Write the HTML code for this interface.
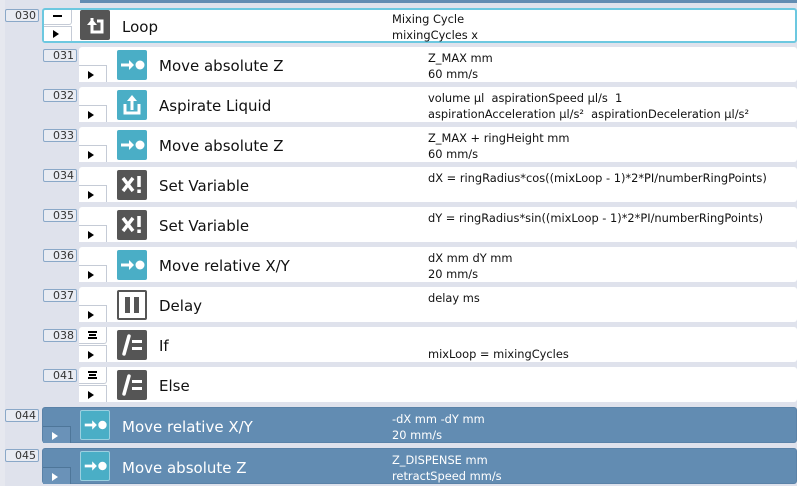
<!DOCTYPE html>
<html><head><meta charset="utf-8"><style>
*{margin:0;padding:0;box-sizing:border-box}
body{width:797px;height:486px;overflow:hidden;background:#dfe2ec;font-family:"DejaVu Sans","Liberation Sans",sans-serif;position:relative}
.a{position:absolute}
.tag{position:absolute;height:13px;width:34px;border:1px solid #8aa8c8;border-radius:2px;background:#e8ebf2;font-size:11px;line-height:11px;text-align:right;padding-right:2px;color:#333}
.row{position:absolute;left:79px;width:718px;height:35px;background:#fff;border-radius:3px}
.ctl{position:absolute;left:0;top:18px;width:28px;height:17px;border:1px solid #c5cbd6;border-left:none;border-bottom:none;background:#fff}
.ctl i{position:absolute;left:9px;top:5px;width:0;height:0;border-left:6px solid #000;border-top:4px solid transparent;border-bottom:4px solid transparent}
.ic{position:absolute;left:38px;top:3px;width:30px;height:30px;border-radius:2px}
.t{position:absolute;left:80px;top:10px;font-size:15px;color:#111}
.p{position:absolute;left:349px;top:3px;font-size:11.4px;line-height:16px;color:#111;white-space:nowrap}
.blue{position:absolute;left:42px;width:755px;height:36px;background:#628cb2;border-radius:3px;border:1px solid #5a82a8}
.blue .t{left:79px;color:#fff}
.blue .p{left:349px;color:#fff}
.blue .ic{left:37px;top:2px;border:1px solid #9cd0e0}
.blue .ctl{background:#6a92b8;border-color:#4e7699}
.blue .ctl i{border-left-color:#fff}
</style></head><body>
<div class="a" style="left:80px;top:0;width:717px;height:3px;background:#628cb2"></div>
<div class="a" style="left:0;top:0;width:5px;height:486px;background:#e6e8ef"></div>

<div class="tag" style="left:5px;top:9px">030</div>
<div class="a" style="left:42px;top:8px;width:755px;height:35px;background:#fff;border:2px solid #6cc8e0;border-radius:3px">
 <div class="a" style="left:0;top:0;width:28px;height:15px;border:1px solid #c5cbd6;border-left:none;border-top:none;border-radius:0 0 3px 0"><div class="a" style="left:9px;top:5px;width:9px;height:2px;background:#000"></div></div>
 <div class="ctl" style="top:16px;height:15px"><i style="top:3px"></i></div>
 <svg class="ic" style="left:36px;top:0;background:#555" viewBox="0 0 30 30"><path d="M12 8 L12 22 L22 22 L22 11 L17 11" fill="none" stroke="#fff" stroke-width="3"/><path d="M6 13 L11 7 L16 13 Z" fill="#fff" transform="translate(1,2)"/></svg>
 <div class="t" style="left:78px;top:8px">Loop</div>
 <div class="p" style="left:348px;top:1px">Mixing Cycle<br>mixingCycles x</div>
</div>

<div class="tag" style="left:43px;top:49px">031</div>
<div class="row" style="top:47px"><div class="ctl"><i></i></div>
<svg class="ic" style="background:#4aaec6" viewBox="0 0 30 30"><path d="M4 15 H14" stroke="#fff" stroke-width="3"/><path d="M12 10 L17 15 L12 20 Z" fill="#fff"/><circle cx="23" cy="15" r="4.5" fill="#fff"/></svg>
<div class="t">Move absolute Z</div><div class="p">Z_MAX mm<br>60 mm/s</div></div>

<div class="tag" style="left:43px;top:89px">032</div>
<div class="row" style="top:87px"><div class="ctl"><i></i></div>
<svg class="ic" style="background:#4aaec6" viewBox="0 0 30 30"><path d="M8 14 V23 H22 V14" fill="none" stroke="#fff" stroke-width="3"/><path d="M15 20 V9" stroke="#fff" stroke-width="3"/><path d="M10 11 L15 5 L20 11 Z" fill="#fff"/></svg>
<div class="t">Aspirate Liquid</div><div class="p">volume µl&nbsp; aspirationSpeed µl/s&nbsp; 1<br>aspirationAcceleration µl/s²&nbsp; aspirationDeceleration µl/s²</div></div>

<div class="tag" style="left:43px;top:129px">033</div>
<div class="row" style="top:127px"><div class="ctl"><i></i></div>
<svg class="ic" style="background:#4aaec6" viewBox="0 0 30 30"><path d="M4 15 H14" stroke="#fff" stroke-width="3"/><path d="M12 10 L17 15 L12 20 Z" fill="#fff"/><circle cx="23" cy="15" r="4.5" fill="#fff"/></svg>
<div class="t">Move absolute Z</div><div class="p">Z_MAX + ringHeight mm<br>60 mm/s</div></div>

<div class="tag" style="left:43px;top:169px">034</div>
<div class="row" style="top:167px"><div class="ctl"><i></i></div>
<svg class="ic" style="background:#555" viewBox="0 0 30 30"><path d="M6 8 L16 21 M16 8 L6 21" stroke="#fff" stroke-width="3.5"/><path d="M22 6 V17" stroke="#fff" stroke-width="3.5"/><rect x="20.3" y="19.5" width="3.5" height="3.5" fill="#fff"/></svg>
<div class="t">Set Variable</div><div class="p">dX = ringRadius*cos((mixLoop - 1)*2*PI/numberRingPoints)</div></div>

<div class="tag" style="left:43px;top:209px">035</div>
<div class="row" style="top:207px"><div class="ctl"><i></i></div>
<svg class="ic" style="background:#555" viewBox="0 0 30 30"><path d="M6 8 L16 21 M16 8 L6 21" stroke="#fff" stroke-width="3.5"/><path d="M22 6 V17" stroke="#fff" stroke-width="3.5"/><rect x="20.3" y="19.5" width="3.5" height="3.5" fill="#fff"/></svg>
<div class="t">Set Variable</div><div class="p">dY = ringRadius*sin((mixLoop - 1)*2*PI/numberRingPoints)</div></div>

<div class="tag" style="left:43px;top:249px">036</div>
<div class="row" style="top:247px"><div class="ctl"><i></i></div>
<svg class="ic" style="background:#4aaec6" viewBox="0 0 30 30"><path d="M4 15 H14" stroke="#fff" stroke-width="3"/><path d="M12 10 L17 15 L12 20 Z" fill="#fff"/><circle cx="23" cy="15" r="4.5" fill="#fff"/></svg>
<div class="t">Move relative X/Y</div><div class="p">dX mm dY mm<br>20 mm/s</div></div>

<div class="tag" style="left:43px;top:289px">037</div>
<div class="row" style="top:287px"><div class="ctl"><i></i></div>
<svg class="ic" style="background:#fff;border:2px solid #555" viewBox="0 0 26 26"><rect x="6" y="5" width="5" height="16" fill="#555"/><rect x="15" y="5" width="5" height="16" fill="#555"/></svg>
<div class="t">Delay</div><div class="p">delay ms</div></div>

<div class="tag" style="left:43px;top:329px">038</div>
<div class="row" style="top:327px">
<div class="a" style="left:0;top:0;width:28px;height:17px;border:1px solid #c5cbd6;border-left:none;border-top:none;border-radius:0 0 3px 0"><div class="a" style="left:9px;top:4px;width:9px;height:2px;background:#000"></div><div class="a" style="left:10px;top:7px;width:7px;height:2px;background:#000"></div><div class="a" style="left:9px;top:10px;width:9px;height:2px;background:#000"></div></div>
<div class="ctl"><i></i></div>
<svg class="ic" style="background:#555" viewBox="0 0 30 30"><path d="M12 6 L7 24" stroke="#fff" stroke-width="3.5" stroke-linecap="round"/><rect x="15" y="10" width="10" height="3" fill="#fff"/><rect x="15" y="17" width="10" height="3" fill="#fff"/></svg>
<div class="t">If</div><div class="p" style="top:19px">mixLoop = mixingCycles</div></div>

<div class="tag" style="left:43px;top:369px">041</div>
<div class="row" style="top:367px">
<div class="a" style="left:0;top:0;width:28px;height:17px;border:1px solid #c5cbd6;border-left:none;border-top:none;border-radius:0 0 3px 0"><div class="a" style="left:9px;top:4px;width:9px;height:2px;background:#000"></div><div class="a" style="left:10px;top:7px;width:7px;height:2px;background:#000"></div><div class="a" style="left:9px;top:10px;width:9px;height:2px;background:#000"></div></div>
<div class="ctl"><i></i></div>
<svg class="ic" style="background:#555" viewBox="0 0 30 30"><path d="M12 6 L7 24" stroke="#fff" stroke-width="3.5" stroke-linecap="round"/><rect x="15" y="10" width="10" height="3" fill="#fff"/><rect x="15" y="17" width="10" height="3" fill="#fff"/></svg>
<div class="t">Else</div></div>

<div class="tag" style="left:5px;top:409px">044</div>
<div class="blue" style="top:407px"><div class="ctl" style="top:18px;height:17px"><i style="border-left-color:#fff"></i></div>
<svg class="ic" style="background:#4aaec6" viewBox="0 0 30 30"><path d="M4 15 H14" stroke="#fff" stroke-width="3"/><path d="M12 10 L17 15 L12 20 Z" fill="#fff"/><circle cx="23" cy="15" r="4.5" fill="#fff"/></svg>
<div class="t">Move relative X/Y</div><div class="p">-dX mm -dY mm<br>20 mm/s</div></div>

<div class="tag" style="left:5px;top:449px">045</div>
<div class="blue" style="top:448px"><div class="ctl" style="top:18px;height:17px"><i style="border-left-color:#fff"></i></div>
<svg class="ic" style="background:#4aaec6" viewBox="0 0 30 30"><path d="M4 15 H14" stroke="#fff" stroke-width="3"/><path d="M12 10 L17 15 L12 20 Z" fill="#fff"/><circle cx="23" cy="15" r="4.5" fill="#fff"/></svg>
<div class="t">Move absolute Z</div><div class="p">Z_DISPENSE mm<br>retractSpeed mm/s</div></div>
</body></html>
